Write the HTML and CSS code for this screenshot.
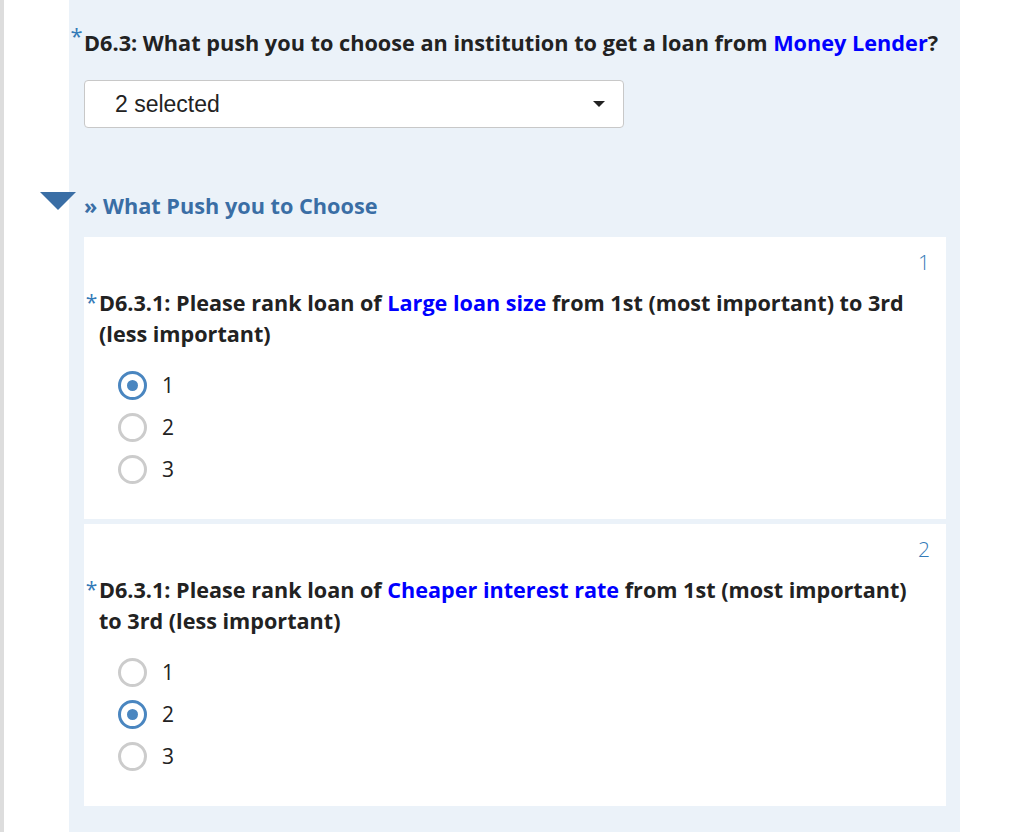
FILE: index.html
```html
<!DOCTYPE html>
<html>
<head>
<meta charset="utf-8">
<link rel="stylesheet" href="styles.css">
</head>
<body>
<div class="rail"></div>
<div class="outer">
  <div class="panel">
    <div class="q-title">
      <span class="req">*</span>
      <span class="q-text">D6.3: What push you to choose an institution to get a loan from <span class="hl">Money Lender</span>?</span>
    </div>
    <div class="select">
      <span class="select-text">2 selected</span>
      <span class="caret"></span>
    </div>

    <div class="group-head">
      <span class="toggle"></span>
      <span class="group-title">» What Push you to Choose</span>
    </div>

    <div class="card">
      <div class="card-num">1</div>
      <div class="sub-q">
        <span class="req2">*</span>
        <span class="sub-text">D6.3.1: Please rank loan of <span class="hl">Large loan size</span> from 1st (most important) to 3rd (less important)</span>
      </div>
      <div class="options">
        <div class="opt"><span class="radio on"></span><span class="opt-label">1</span></div>
        <div class="opt"><span class="radio"></span><span class="opt-label">2</span></div>
        <div class="opt"><span class="radio"></span><span class="opt-label">3</span></div>
      </div>
    </div>

    <div class="card">
      <div class="card-num">2</div>
      <div class="sub-q">
        <span class="req2">*</span>
        <span class="sub-text">D6.3.1: Please rank loan of <span class="hl">Cheaper interest rate</span> from 1st (most important) to 3rd (less important)</span>
      </div>
      <div class="options">
        <div class="opt"><span class="radio"></span><span class="opt-label">1</span></div>
        <div class="opt"><span class="radio on"></span><span class="opt-label">2</span></div>
        <div class="opt"><span class="radio"></span><span class="opt-label">3</span></div>
      </div>
    </div>
  </div>
</div>
</body>
</html>
```

FILE: styles.css
```css
html, body {
  margin: 0;
  padding: 0;
  height: 100%;
}
body {
  display: flex;
  background: #ffffff;
  font-family: "Open Sans", "Noto Sans", sans-serif;
  color: #222222;
  overflow: hidden;
}
.rail {
  width: 4px;
  flex: none;
  background: #dddddd;
}
.outer {
  padding-left: 65px;
  flex: none;
}
.panel {
  width: 862px;
  min-height: 832px;
  background: #ebf2f9;
  padding: 0 14px 0 15px;
}
.q-title {
  display: flex;
  margin-left: -15px;
  padding-top: 28px;
  font-weight: 700;
  font-size: 21.7px;
  line-height: 30px;
}
.req {
  width: 15px;
  flex: none;
  color: #337ab7;
  font-weight: 400;
  font-size: 22px;
  line-height: 16px;
  text-align: center;
  margin-top: -1px;
}
.hl {
  color: #0000ff;
}
.select {
  margin-top: 22px;
  height: 46px;
  border: 1px solid #c8c8c8;
  border-radius: 4px;
  background: #fff;
  display: flex;
  align-items: center;
  justify-content: space-between;
  padding: 0 18px 0 30px;
  box-sizing: content-box;
  width: 490px;
}
.select-text {
  font-family: "Liberation Sans", Arial, sans-serif;
  font-size: 23px;
  color: #222;
}
.caret {
  width: 0;
  height: 0;
  border-left: 6px solid transparent;
  border-right: 6px solid transparent;
  border-top: 6px solid #222;
}
.group-head {
  position: relative;
  margin-top: 62px;
  height: 30px;
  display: flex;
  align-items: center;
}
.toggle {
  position: absolute;
  left: -44px;
  top: 2px;
  width: 0;
  height: 0;
  border-left: 18px solid transparent;
  border-right: 18px solid transparent;
  border-top: 18px solid #3a6ea5;
}
.group-title {
  color: #3a6ea5;
  font-weight: 700;
  font-size: 21.7px;
}
.card {
  background: #fff;
  margin-top: 17px;
  padding: 12px 16px 30px 0;
  height: 240px;
}
.card + .card {
  margin-top: 5px;
}
.card-num {
  text-align: right;
  color: #337ab7;
  font-weight: 300;
  font-size: 21px;
  line-height: 26px;
}
.sub-q {
  display: flex;
  margin-top: 12px;
  font-weight: 700;
  font-size: 21.6px;
  line-height: 31px;
  padding-right: 5px;
}
.req2 {
  width: 15px;
  flex: none;
  color: #337ab7;
  font-weight: 400;
  text-align: center;
  font-size: 21px;
}
.options {
  margin-top: 15px;
  padding-left: 34px;
}
.opt {
  display: flex;
  align-items: center;
  height: 42px;
}
.radio {
  width: 23px;
  height: 23px;
  border: 3px solid #cccccc;
  border-radius: 50%;
  background: #fff;
  position: relative;
  flex: none;
}
.radio.on {
  border-color: #4a86c0;
}
.radio.on::after {
  content: "";
  position: absolute;
  left: 6px;
  top: 6px;
  width: 11px;
  height: 11px;
  border-radius: 50%;
  background: #4a86c0;
}
.opt-label {
  margin-left: 15px;
  font-size: 21px;
  color: #222;
}
```
